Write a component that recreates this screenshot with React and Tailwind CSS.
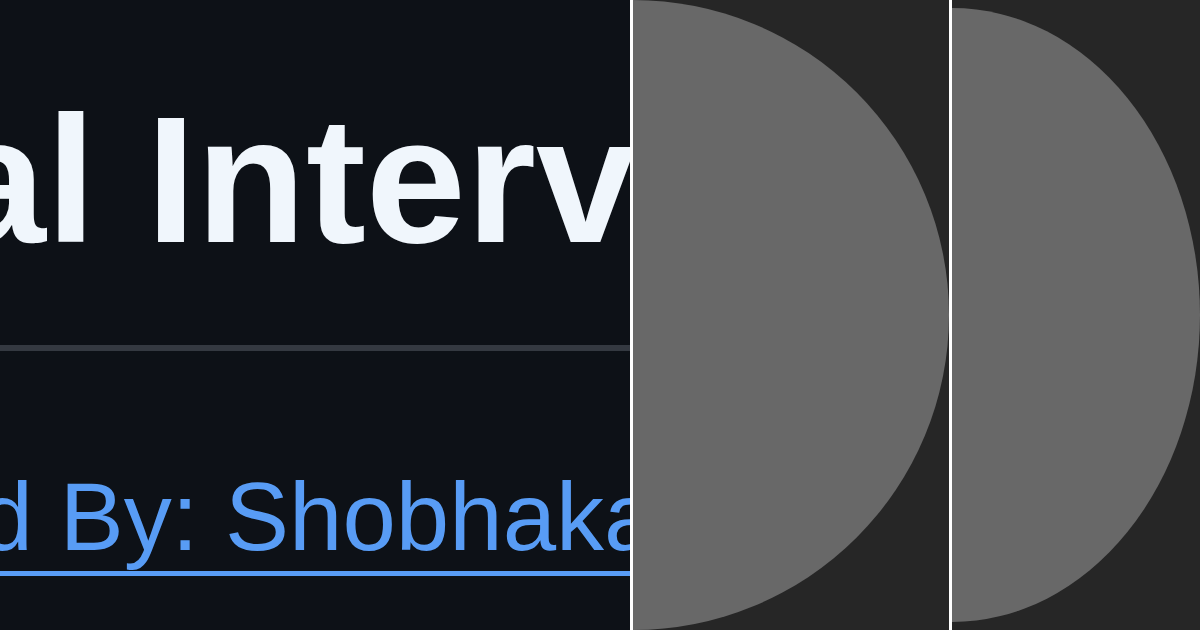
// App.jsx — cropped readme header + two placeholder thumbnails
import React from 'react';

function HalfDisc({ rx, ry }) {
  // disc anchored on the left edge of its panel, centred vertically
  return (
    <svg className="block h-full w-full" viewBox={`0 0 ${rx} 630`} preserveAspectRatio="xMinYMid slice">
      <ellipse cx="0" cy="315" rx={rx} ry={ry} fill="#686868" />
    </svg>
  );
}

export default function App() {
  return (
    <div className="flex h-[630px] w-[1200px] overflow-hidden bg-[#262626]">
      {/* readme header, cut off on both sides */}
      <div className="w-[630px] shrink-0 overflow-hidden bg-[#0d1117] font-['Liberation_Sans',Arial,sans-serif]">
        <h1 className="ml-[-721px] whitespace-nowrap pt-[90px] text-[180px] font-bold leading-none text-[#f0f6fc]">
          Technical Interview Questions
        </h1>
        <div className="mt-[75px] h-[6px] bg-[#343941]" />
        <p className="ml-[-426px] mt-[118px] whitespace-nowrap text-[96px] leading-none">
          <a
            href="#"
            className="text-[#589cf5] underline decoration-[5px] underline-offset-[21px] [text-decoration-skip-ink:none]"
          >
            Developed By: Shobhakar Prasad
          </a>
        </p>
      </div>

      <div className="w-[3px] shrink-0 bg-white" />
      <div className="w-[316px] shrink-0 bg-[#262626]">
        <HalfDisc rx={316} ry={315} />
      </div>
      <div className="w-[3px] shrink-0 bg-white" />
      <div className="flex-1 bg-[#262626]">
        <HalfDisc rx={248} ry={307} />
      </div>
    </div>
  );
}
